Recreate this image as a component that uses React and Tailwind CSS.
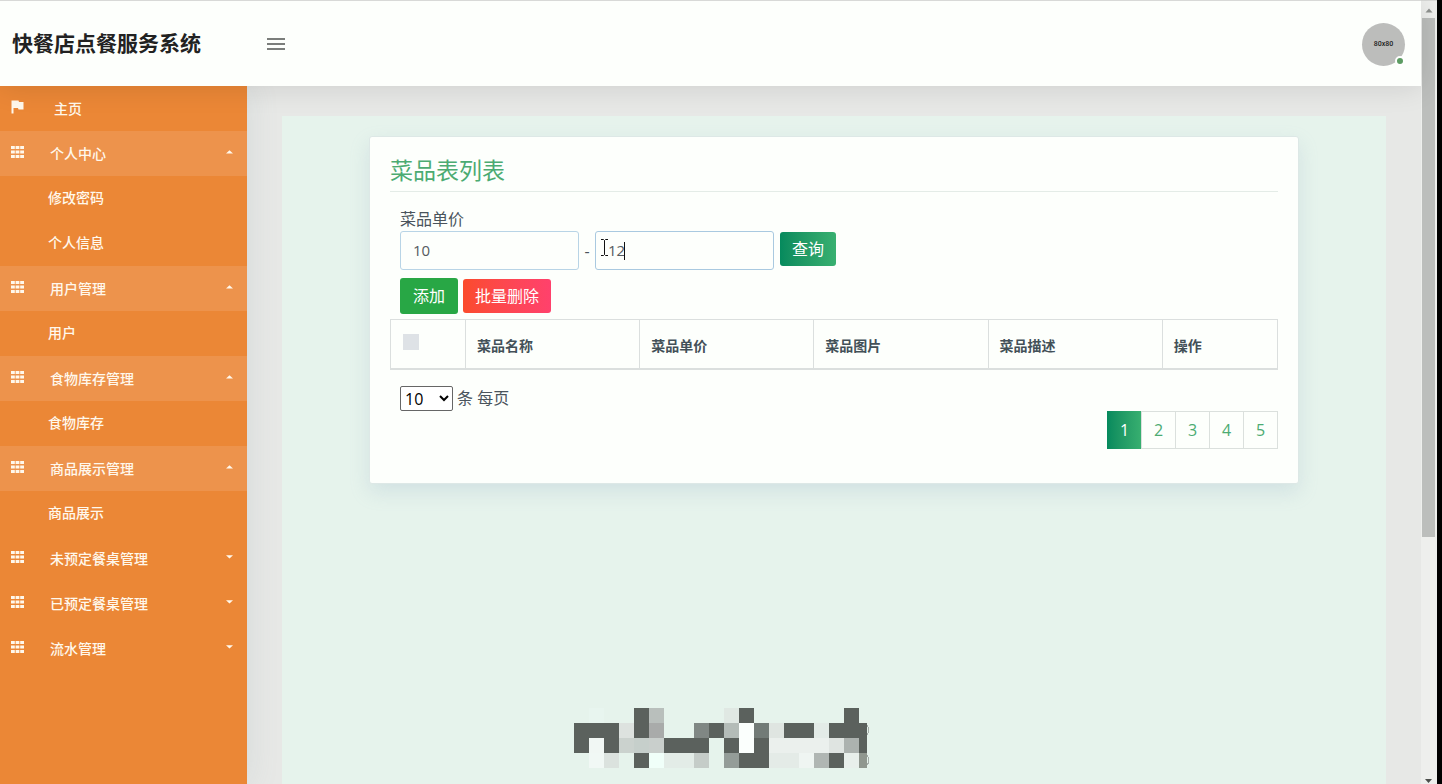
import React, { useState } from 'react';

const menu = [
    { id: 'personal', name: '个人中心', children: ['修改密码', '个人信息'] },
    { id: 'users', name: '用户管理', children: ['用户'] },
    { id: 'stock', name: '食物库存管理', children: ['食物库存'] },
    { id: 'goods', name: '商品展示管理', children: ['商品展示'] },
    { id: 'free', name: '未预定餐桌管理', children: ['未预定餐桌'] },
    { id: 'booked', name: '已预定餐桌管理', children: ['已预定餐桌'] },
    { id: 'flow', name: '流水管理', children: ['流水'] },
];

const D = '#5b615d';

// One row of blocks per line, null leaves the background visible
const mosaic = [
    [null, '#e8f5ef', null, null, D, '#b9bfbc', null, null, null, null, '#e0e8e3', D, null, null, null, null, null, null, D, null],
    [D, D, D, '#dde2df', D, '#a9abaa', null, null, '#808784', D, '#b4bcb8', '#fbfffd', '#727b77', '#dfe5e1', D, D, '#e3ebe7', D, D, D],
    [D, '#f1f7f4', D, '#cbd2ce', '#c6cfcb', '#c9cfcc', D, D, D, null, D, '#fbfffd', D, '#ebf0ed', '#ebf0ed', '#ebf0ed', '#ebf0ed', '#dfe4e1', '#acb2af', D],
    [null, '#f1f8f5', '#dbe2de', null, D, '#f0fff9', '#e3ece7', '#e3ece7', '#c5ccc8', null, '#949c98', D, D, '#e4ebe7', '#e4ebe7', '#eff5f2', '#b0b6b3', D, '#e8efeb', '#90978f'],
];

const GridIcon = () => (
    <svg className="w-[13px] h-3 mb-[3px] shrink-0" viewBox="0 0 13 12" fill="currentColor" aria-hidden="true">
        {[0, 4.5, 9].map((y) => [0, 4.6, 9.2].map((x) => (
            <rect key={`${x}-${y}`} x={x} y={y} width="3.8" height="3" />
        )))}
    </svg>
);

const FlagIcon = () => (
    <svg className="w-[13px] h-[14px] mb-[3px] shrink-0" viewBox="0 0 13 14" fill="currentColor" aria-hidden="true">
        <path d="M0.5 0.5H7.5L8 2H12.5V9.500H7.5L7 8H2.5V13.5H0.5Z" />
    </svg>
);

const Caret = ({ open }) => (
    <svg className="w-[7px] h-1 mb-[3px] shrink-0" viewBox="0 0 7 4" fill="currentColor" aria-hidden="true">
        <path d={open ? 'M3.5 0.3L7 3.5H0Z' : 'M0 0.3H7L3.5 3.5Z'} />
    </svg>
);

function Header({ onToggle }) {
    return (
        <header className="relative z-20 flex items-center h-[86px] shrink-0 bg-[#fdfffc] border-t border-[#d8d9d7] shadow-[0_0_30px_rgba(0,0,0,0.12)]">
            <h1 className="w-[247px] pl-3 text-[21px] font-bold text-[#222] whitespace-nowrap">快餐店点餐服务系统</h1>
            <button type="button" onClick={onToggle} aria-label="菜单" className="ml-5 text-[#7b7e7b]">
                <svg className="w-[18px] h-3" viewBox="0 0 18 12" fill="currentColor">
                    <path d="M0 0H18V2H0ZM0 5H18V7H0ZM0 10H18V12H0Z" />
                </svg>
            </button>
            <div className="relative ml-auto mt-[2px] mr-4 w-[43px] h-[43px] rounded-full bg-[#bcbdbb] flex items-center justify-center">
                <span className="text-[7px] font-medium text-[#222]" style={{ fontFamily: 'Roboto, sans-serif' }}>80x80</span>
                <span className="absolute right-0 bottom-0 w-[10px] h-[10px] rounded-full bg-[#5c9c62] border-2 border-white"></span>
            </div>
        </header>
    );
}

function Sidebar() {
    const [open, setOpen] = useState(['personal', 'users', 'stock', 'goods']);

    const toggle = (id) => {
        setOpen(prev => prev.includes(id) ? prev.filter(x => x !== id) : [...prev, id]);
    };

    return (
        <nav className="relative z-10 w-[247px] shrink-0 bg-[#eb8736] text-[#fff8ec] text-sm font-medium shadow-[0_0_30px_rgba(120,140,150,0.16)]">
            <a href="#home" className="flex items-center h-[45px] pl-[11px] gap-[30px]">
                <FlagIcon />
                <span>主页</span>
            </a>
            {menu.map((item) => {
                const isOpen = open.includes(item.id);
                return (
                    <div key={item.id}>
                        <button
                            type="button"
                            onClick={() => toggle(item.id)}
                            aria-expanded={isOpen}
                            className={`flex items-center w-full h-[45px] pl-[11px] pr-[14px] ${isOpen ? 'bg-[#ed934c]' : ''}`}
                        >
                            <GridIcon />
                            <span className="flex-1 text-left pl-[26px]">{item.name}</span>
                            <Caret open={isOpen} />
                        </button>
                        {isOpen && item.children.map((child) => (
                            <a key={child} href="#list" className="flex items-center h-[45px] pl-12 pb-[2px]">{child}</a>
                        ))}
                    </div>
                );
            })}
        </nav>
    );
}

function PriceFilter() {
    const [min, setMin] = useState('10');
    const [max, setMax] = useState('12');

    return (
        <form className="px-[10px] pt-[15px]" onSubmit={(e) => e.preventDefault()}>
            <label htmlFor="min" className="block leading-6">菜品单价</label>
            <div className="flex items-center">
                <input id="min" value={min} onChange={(e) => setMin(e.target.value)} className="w-[179px] h-[39px] px-3 pb-[2px] rounded-[3px] border border-[#b8d4e6] text-[#555b60] text-[15px]" />
                <span className="w-4 text-center">-</span>
                <div className="relative">
                    <input id="max" aria-label="最高单价" value={max} onChange={(e) => setMax(e.target.value)} className="w-[179px] h-[39px] px-3 pb-[2px] rounded-[3px] border border-[#a9c9e0] text-[#555b60] text-[15px]" />
                    {/* mouse pointer and text caret */}
                    <svg className="absolute left-1 top-2 w-7 h-[22px] pointer-events-none" viewBox="0 0 28 22" fill="none" stroke="#111" aria-hidden="true">
                        <path d="M2 0.5H4.5L5.5 1.5L6.5 0.5H9M5.5 1.5V15.5M2 16.5H4.5L5.5 15.5L6.5 16.5H9" />
                        <path d="M25.5 3V21" />
                    </svg>
                </div>
                <button type="submit" className="ml-[6px] -mt-1 h-[34px] px-3 rounded-[3px] bg-linear-to-r from-[#058a5d] to-[#38b070] text-white">查询</button>
            </div>
            <div className="flex items-center gap-[5px] pt-2 pb-[5px]">
                <button type="button" className="h-9 px-[13px] rounded-[3px] bg-[#28a745] text-white">添加</button>
                <button type="button" className="h-[34px] px-3 rounded-[3px] bg-linear-to-r from-[#fb4b2b] to-[#ff416c] text-white">批量删除</button>
            </div>
        </form>
    );
}

function DishCard() {
    const [page, setPage] = useState(1);
    const columns = ['菜品名称', '菜品单价', '菜品图片', '菜品描述'];

    return (
        <section className="bg-[#fdfffc] rounded-[3px] border border-[#dde8e6] pl-5 pr-5 pt-[13px] pb-[34px] shadow-[0_8px_20px_rgba(130,160,190,0.2)]">
            <h2 className="text-[23px] leading-10 pb-px text-[#4cab72] border-b border-[#e4ece7] font-normal">菜品表列表</h2>
            <PriceFilter />
            <table className="w-full table-fixed border-collapse text-sm text-[#435058]">
                <thead>
                    <tr className="h-[49px] border border-b-2 border-[#dbdfde]">
                        <th className="w-[75px] px-3 text-left border-r border-[#dbdfde]">
                            <input type="checkbox" aria-label="全选" className="block appearance-none w-4 h-4 mb-1 bg-[#dee2e6] checked:bg-[#28a745]" />
                        </th>
                        {columns.map((name) => (
                            <th key={name} className="px-[11px] pt-1 text-left font-bold border-r border-[#dbdfde]">{name}</th>
                        ))}
                        <th className="w-[13%] px-[11px] pt-1 text-left font-bold">操作</th>
                    </tr>
                </thead>
            </table>
            <div className="flex items-center pl-[10px] pt-4 gap-1">
                <select aria-label="条 每页" defaultValue="10" className="w-[53px] h-[25px] border border-[#666] rounded-[2px] bg-white text-black">
                    <option>10</option>
                    <option>20</option>
                    <option>50</option>
                </select>
                <span className="leading-[25px]">条 每页</span>
            </div>
            <ul className="flex justify-end">
                {[1, 2, 3, 4, 5].map((n) => (
                    <li key={n} className="-ml-px">
                        <button
                            type="button"
                            onClick={() => setPage(n)}
                            className={`block h-[38px] w-[35px] border text-center ${n === page ? 'border-transparent bg-linear-to-r from-[#058a5d] to-[#38b070] bg-origin-border text-white' : 'border-[#dbe0dd] text-[#4cab72]'}`}
                        >
                            {n}
                        </button>
                    </li>
                ))}
            </ul>
        </section>
    );
}

function Mosaic() {
    return (
        <svg className="absolute z-30 bottom-4 left-1/2 -translate-x-[147px] w-[298px] h-[60px] pointer-events-none" viewBox="0 0 298 60" shapeRendering="crispEdges" aria-hidden="true">
            {mosaic.map((row, y) => row.map((color, x) => color && (
                <rect key={`${x}-${y}`} x={x * 15} y={y * 15} width={x === 19 ? 8 : 15} height="15" fill={color} />
            )))}
            <path d="M293 17Q297 22 293 27M293 47Q297 52 293 57" fill="none" stroke="#a5ada9" />
        </svg>
    );
}

function ScrollTrack() {
    return (
        <div className="flex flex-col items-center w-4 shrink-0 bg-[#eeefed] border-t border-[#d8d9d7]" aria-hidden="true">
            <svg className="w-4 h-[17px] shrink-0" viewBox="0 0 16 17"><path d="M4.500 11.500L8 7.500L11.500 11.500Z" fill="#8e918e" /></svg>
            <div className="flex-1 w-full pl-px pr-[2px]">
                <div className="h-[69%] bg-[#bcbebc]"></div>
            </div>
            <svg className="w-4 h-[14px] shrink-0" viewBox="0 0 16 14"><path d="M4 9H11L7.500 13Z" fill="#4b4e4b" /></svg>
        </div>
    );
}

export default function App() {
    const [showMenu, setShowMenu] = useState(true);

    return (
        <div className="relative flex h-screen overflow-hidden bg-black text-base text-[#4a545c]" style={{ fontFamily: '"Open Sans", "Noto Sans CJK SC", sans-serif' }}>
            <div className="flex flex-col flex-1 min-w-0">
                <Header onToggle={() => setShowMenu(!showMenu)} />
                <div className="flex flex-1 min-h-0 bg-[#e7e8e6]">
                    {showMenu && <Sidebar />}
                    <main className="flex-1 min-w-0 px-[35px] pt-[30px]">
                        <div className="relative z-10 h-full bg-[#e6f3ec] px-[87px] pt-5">
                            <DishCard />
                        </div>
                    </main>
                </div>
            </div>
            <ScrollTrack />
            <div className="w-[5px] shrink-0 bg-black"></div>
            <Mosaic />
        </div>
    );
}
